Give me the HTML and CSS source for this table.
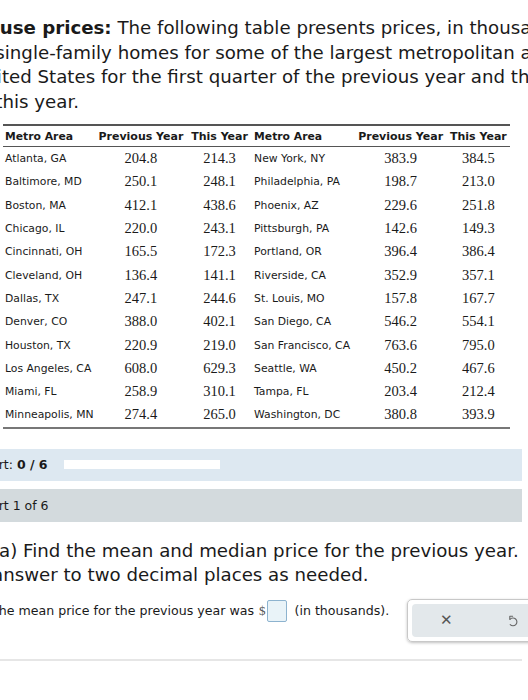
FILE: index.html
```html
<!DOCTYPE html>
<html>
<head>
<meta charset="utf-8">
<link rel="stylesheet" href="styles.css">
</head>
<body>
<div class="page">
  <p class="intro"><b>House prices:</b> The following table presents prices, in thousands of dollars,<br>of single-family homes for some of the largest metropolitan areas in the<br>United States for the first quarter of the previous year and the first quarter<br>of this year.</p>

  <table class="data">
    <thead>
      <tr><th class="name">Metro Area</th><th class="num">Previous Year</th><th class="num">This Year</th><th class="name">Metro Area</th><th class="num">Previous Year</th><th class="num">This Year</th></tr>
    </thead>
    <tbody>
      <tr><td class="name">Atlanta, GA</td><td class="num">204.8</td><td class="num">214.3</td><td class="name">New York, NY</td><td class="num">383.9</td><td class="num">384.5</td></tr>
      <tr><td class="name">Baltimore, MD</td><td class="num">250.1</td><td class="num">248.1</td><td class="name">Philadelphia, PA</td><td class="num">198.7</td><td class="num">213.0</td></tr>
      <tr><td class="name">Boston, MA</td><td class="num">412.1</td><td class="num">438.6</td><td class="name">Phoenix, AZ</td><td class="num">229.6</td><td class="num">251.8</td></tr>
      <tr><td class="name">Chicago, IL</td><td class="num">220.0</td><td class="num">243.1</td><td class="name">Pittsburgh, PA</td><td class="num">142.6</td><td class="num">149.3</td></tr>
      <tr><td class="name">Cincinnati, OH</td><td class="num">165.5</td><td class="num">172.3</td><td class="name">Portland, OR</td><td class="num">396.4</td><td class="num">386.4</td></tr>
      <tr><td class="name">Cleveland, OH</td><td class="num">136.4</td><td class="num">141.1</td><td class="name">Riverside, CA</td><td class="num">352.9</td><td class="num">357.1</td></tr>
      <tr><td class="name">Dallas, TX</td><td class="num">247.1</td><td class="num">244.6</td><td class="name">St. Louis, MO</td><td class="num">157.8</td><td class="num">167.7</td></tr>
      <tr><td class="name">Denver, CO</td><td class="num">388.0</td><td class="num">402.1</td><td class="name">San Diego, CA</td><td class="num">546.2</td><td class="num">554.1</td></tr>
      <tr><td class="name">Houston, TX</td><td class="num">220.9</td><td class="num">219.0</td><td class="name">San Francisco, CA</td><td class="num">763.6</td><td class="num">795.0</td></tr>
      <tr><td class="name">Los Angeles, CA</td><td class="num">608.0</td><td class="num">629.3</td><td class="name">Seattle, WA</td><td class="num">450.2</td><td class="num">467.6</td></tr>
      <tr><td class="name">Miami, FL</td><td class="num">258.9</td><td class="num">310.1</td><td class="name">Tampa, FL</td><td class="num">203.4</td><td class="num">212.4</td></tr>
      <tr><td class="name">Minneapolis, MN</td><td class="num">274.4</td><td class="num">265.0</td><td class="name">Washington, DC</td><td class="num">380.8</td><td class="num">393.9</td></tr>
    </tbody>
  </table>

  <div class="progress">
    <span class="plabel">Part: <b>0 / 6</b></span>
    <span class="pbar"></span>
  </div>

  <div class="partbar"><span class="ptext">Part 1 of 6</span></div>

  <div class="qwrap">
    <p class="question">(a) Find the mean and median price for the previous year. Round your<br>answer to two decimal places as needed.</p>
  </div>

  <div class="answer-row">
    <p class="answer"><span class="lead">The mean price for the previous year was</span><span class="dollar">$</span><span class="box"></span><span class="after">(in thousands).</span></p>
    <div class="tools">
      <div class="tools-inner">
        <span class="clear">&#x2715;</span>
        <svg class="undo" width="12" height="13" viewBox="0 0 12 13"><path d="M3 5.4 A3.9 3.9 0 1 1 3.2 10.6" fill="none" stroke="#666" stroke-width="1.1" stroke-linecap="round"/><path d="M5.6 2.3 H2.8 V5.1" fill="none" stroke="#666" stroke-width="1.1" stroke-linecap="round" stroke-linejoin="round"/></svg>
      </div>
    </div>
  </div>

  <div class="rule"></div>
</div>
</body>
</html>
```

FILE: styles.css
```css
html, body {
  margin: 0;
  padding: 0;
  background: #fff;
}
body {
  width: 528px;
  height: 700px;
  overflow: hidden;
  font-family: "DejaVu Sans", Verdana, sans-serif;
  color: #1a1a1a;
}
.page {
  position: relative;
}
.intro {
  margin: 16px 0 0 -28px;
  font-size: 18.2px;
  line-height: 24.5px;
  white-space: nowrap;
}
.data {
  border-collapse: collapse;
  margin: 10px 0 0 3px;
  width: 507px;
  border-top: 2px solid #555;
  border-bottom: 2px solid #777;
}
.data th {
  font-size: 11px;
  font-weight: bold;
  height: 20px;
  padding: 0;
  border-bottom: 1.5px solid #555;
  white-space: nowrap;
  text-align: left;
}
.data td {
  height: 23.3px;
  padding: 0;
  white-space: nowrap;
}
.data .name {
  padding-left: 2px;
  font-size: 10.8px;
  text-align: left;
}
.data td.num {
  font-family: "Liberation Serif", "Times New Roman", serif;
  font-size: 14.5px;
  text-align: center;
}
.data th.num {
  text-align: center;
}
.data th:nth-child(1) { width: 90px; }
.data th:nth-child(2) { width: 93px; }
.data th:nth-child(3) { width: 66px; }
.data th:nth-child(4) { width: 101px; }
.data th:nth-child(5) { width: 93px; }
.data th:nth-child(6) { width: 64px; }

.progress {
  margin-top: 20px;
  height: 32px;
  width: 522px;
  background: #dde8f1;
  display: flex;
  align-items: center;
  gap: 16px;
}
.plabel {
  margin-left: -16px;
  font-size: 12.5px;
  white-space: nowrap;
}
.pbar {
  width: 156px;
  height: 9px;
  background: #fff;
}
.partbar {
  margin-top: 8px;
  height: 33px;
  width: 522px;
  background: #d3dadd;
  display: flex;
  align-items: center;
}
.ptext {
  margin-left: -16px;
  font-size: 12.5px;
  white-space: nowrap;
}
.qwrap {
  width: 522px;
  overflow: hidden;
  margin-top: 17px;
}
.question {
  margin: 0 0 0 -8px;
  font-size: 18.2px;
  line-height: 24px;
  white-space: nowrap;
}
.answer-row {
  margin-top: 13px;
  display: flex;
  align-items: flex-start;
}
.answer {
  margin: 0 0 0 -9px;
  width: 416px;
  font-size: 12.6px;
  white-space: nowrap;
  display: flex;
  align-items: center;
  flex-shrink: 0;
}
.dollar {
  font-family: "Liberation Serif", serif;
  font-size: 13px;
  color: #555;
  margin-left: 5px;
}
.box {
  display: inline-block;
  width: 18px;
  height: 20px;
  border: 1px solid #8db3cf;
  background: #e9f3f8;
  border-radius: 2px;
  margin-left: 1px;
}
.after {
  margin-left: 8px;
}
.tools {
  margin-top: -1px;
  border: 1px solid #c8c8c8;
  border-radius: 5px;
  padding: 4px;
  box-shadow: 0 1px 3px rgba(0,0,0,0.25);
  width: 140px;
  flex-shrink: 0;
}
.tools-inner {
  background: #e3e8eb;
  height: 33px;
  border-radius: 4px;
  display: flex;
  align-items: center;
  padding-left: 28px;
  gap: 54px;
}
.clear {
  font-size: 15px;
  color: #555;
  line-height: 1;
}
.undo {
  display: block;
}
.rule {
  margin-top: 17px;
  width: 522px;
  height: 2px;
  background: #e6e6e6;
}
```
